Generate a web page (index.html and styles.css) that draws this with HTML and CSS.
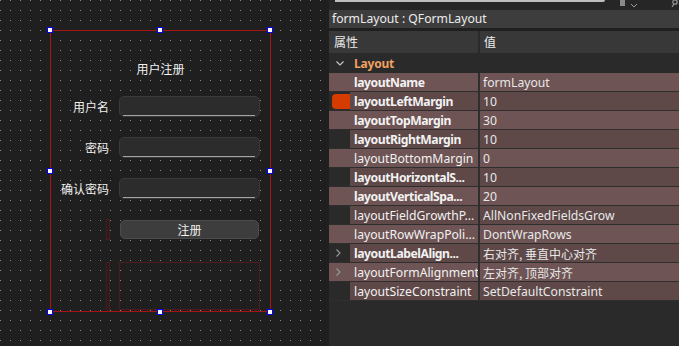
FILE: index.html
```html
<!DOCTYPE html>
<html>
<head>
<meta charset="utf-8">
<link rel="stylesheet" href="styles.css">
</head>
<body>
<div class="app">
  <div class="canvas">
    <div class="form">
      <span class="handle h-tl"></span>
      <span class="handle h-tm"></span>
      <span class="handle h-tr"></span>
      <span class="handle h-ml"></span>
      <span class="handle h-mr"></span>
      <span class="handle h-bl"></span>
      <span class="handle h-bm"></span>
      <span class="handle h-br"></span>
      <div class="grid">
        <div class="title">用户注册</div>
        <div class="lbl">用户名</div><div class="edit"></div>
        <div class="lbl">密码</div><div class="edit"></div>
        <div class="lbl">确认密码</div><div class="edit"></div>
        <div class="ghost-l"></div><div class="btn">注册</div>
        <div class="ghost-l spacer"></div><div class="ghost-f"></div>
      </div>
    </div>
  </div>
  <div class="panel">
    <div class="toolbar">
      <div class="filter"></div>
      <div class="tb-icon"></div>
      <svg class="tb-arrow" width="6" height="4" viewBox="0 0 6 4"><path d="M0 0 L3 3 L6 0" fill="none" stroke="#9a9a9a" stroke-width="1"/></svg>
      <svg class="tb-gear" width="8" height="7" viewBox="0 0 8 7"><circle cx="4" cy="2" r="2.2" fill="none" stroke="#9a9a9a" stroke-width="1.2"/><path d="M1 7 L3 4" stroke="#9a9a9a" stroke-width="1.2"/></svg>
    </div>
    <div class="titlebar">formLayout : QFormLayout</div>
    <div class="sep"></div>
    <div class="header"><div class="h-name">属性</div><div class="h-val">值</div></div>
    <div class="group">
      <svg class="gchev" width="8" height="5" viewBox="0 0 8 5"><path d="M0.5 0.5 L4 4 L7.5 0.5" fill="none" stroke="#c8c8c8" stroke-width="1.2"/></svg>
      <span class="gname">Layout</span>
    </div>
    <div class="row alt"><div class="ind"></div><div class="name b">layoutName</div><div class="val">formLayout</div></div>
    <div class="row"><div class="ind"><span class="marker"></span></div><div class="name b">layoutLeftMargin</div><div class="val">10</div></div>
    <div class="row alt"><div class="ind"></div><div class="name b">layoutTopMargin</div><div class="val">30</div></div>
    <div class="row"><div class="ind"></div><div class="name b">layoutRightMargin</div><div class="val">10</div></div>
    <div class="row alt"><div class="ind"></div><div class="name">layoutBottomMargin</div><div class="val">0</div></div>
    <div class="row"><div class="ind"></div><div class="name b">layoutHorizontalS...</div><div class="val">10</div></div>
    <div class="row alt"><div class="ind"></div><div class="name b">layoutVerticalSpa...</div><div class="val">20</div></div>
    <div class="row"><div class="ind"></div><div class="name">layoutFieldGrowthP...</div><div class="val">AllNonFixedFieldsGrow</div></div>
    <div class="row alt"><div class="ind"></div><div class="name">layoutRowWrapPoli...</div><div class="val">DontWrapRows</div></div>
    <div class="row"><div class="ind"><svg class="rchev" width="5" height="8" viewBox="0 0 5 8"><path d="M0.5 0.5 L4 4 L0.5 7.5" fill="none" stroke="#9a9a9a" stroke-width="1.1"/></svg></div><div class="name b">layoutLabelAlign...</div><div class="val cjk">右对齐, 垂直中心对齐</div></div>
    <div class="row alt"><div class="ind"><svg class="rchev" width="5" height="8" viewBox="0 0 5 8"><path d="M0.5 0.5 L4 4 L0.5 7.5" fill="none" stroke="#9a9a9a" stroke-width="1.1"/></svg></div><div class="name">layoutFormAlignment</div><div class="val cjk">左对齐, 顶部对齐</div></div>
    <div class="row"><div class="ind"></div><div class="name">layoutSizeConstraint</div><div class="val">SetDefaultConstraint</div></div>
  </div>
</div>
</body>
</html>
```

FILE: styles.css
```css
* { box-sizing: border-box; }
html, body { margin: 0; padding: 0; }
body {
  width: 679px;
  height: 346px;
  overflow: hidden;
  background: #202020;
  font-family: "Noto Sans", "Noto Sans CJK SC", sans-serif;
}
.app { display: flex; height: 346px; }

/* ---------- designer canvas ---------- */
.canvas {
  width: 329px;
  flex: none;
  height: 100%;
  background-color: #1f1f1f;
  background-image:
    linear-gradient(90deg, #1f1f1f 9px, transparent 9px),
    linear-gradient(#1f1f1f 9px, #8a8a8a 9px);
  background-size: 10px 10px;
  background-position: 1px 1px;
  padding: 30px 0 0 50px;
}
.form {
  position: relative;
  width: 221px;
  height: 282px;
  border: 1px solid #a81414;
}
.handle {
  position: absolute;
  width: 6px;
  height: 6px;
  background: #fff;
  border: 1px solid #0000ff;
  z-index: 2;
}
.h-tl { left: -4px; top: -4px; }
.h-tm { left: 106px; top: -4px; }
.h-tr { left: 216px; top: -4px; }
.h-ml { left: -4px; top: 137px; }
.h-mr { left: 216px; top: 137px; }
.h-bl { left: -4px; top: 278px; }
.h-bm { left: 106px; top: 278px; }
.h-br { left: 216px; top: 278px; }

.grid {
  display: grid;
  grid-template-columns: 48px 141px;
  grid-template-rows: 15px 21px 21px 21px 21px 51px;
  column-gap: 10px;
  row-gap: 20px;
  padding: 30px 10px 0 10px;
  font-family: "Noto Sans CJK SC", sans-serif;
  font-size: 12px;
  color: #f0f0f0;
}
.title {
  grid-column: 1 / -1;
  text-align: center;
  line-height: 15px;
}
.lbl {
  text-align: right;
  align-self: center;
  line-height: 16px;
  white-space: nowrap;
}
.edit {
  position: relative;
  background: #2c2c2c;
  border: 1px solid #3a3a3a;
  border-radius: 5px;
}
.edit::after {
  content: "";
  position: absolute;
  left: 3px;
  right: 4px;
  bottom: 0;
  height: 1px;
  background: #a3a3a3;
}
.btn {
  margin: 1px;
  background: #3d3d3d;
  border: 1px solid #4c4c4c;
  border-radius: 5px;
  display: flex;
  align-items: center;
  justify-content: center;
  line-height: 16px;
}
.ghost-l {
  justify-self: end;
  width: 4px;
  margin-right: -1px;
  border: 1px solid #4e1a1a;
}
.ghost-l.spacer { margin-top: 2px; margin-bottom: 1px; }
.ghost-f {
  margin-top: 2px;
  margin-bottom: 1px;
  border: 1px solid #4e1a1a;
}

/* ---------- property panel ---------- */
.panel {
  flex: 1;
  background: #2a2a2a;
  display: flex;
  flex-direction: column;
  font-size: 12.2px;
  color: #ececec;
}
.toolbar {
  height: 10px;
  flex: none;
  background: #262626;
  display: flex;
  align-items: flex-start;
}
.filter {
  margin-left: 6px;
  width: 270px;
  height: 2px;
  background: #bdbdbd;
  border-radius: 0 0 3px 0;
}
.tb-icon {
  margin-left: 15px;
  width: 5px;
  height: 6px;
  background: #8a8a8a;
}
.tb-arrow { margin-left: 6px; margin-top: 4px; }
.tb-gear { margin-left: 34px; }
.titlebar {
  height: 18px;
  flex: none;
  background: #3d3d3d;
  padding-left: 3px;
  line-height: 18px;
  white-space: nowrap;
}
.sep { height: 3px; flex: none; background: #202020; }
.header {
  height: 22px;
  flex: none;
  background: #383838;
  display: grid;
  grid-template-columns: 149px 1fr;
  font-family: "Noto Sans CJK SC", sans-serif;
  font-size: 12px;
  line-height: 22px;
}
.h-name { padding-left: 5px; }
.h-val { border-left: 2px solid #2a2a2a; padding-left: 4px; }
.group {
  height: 20px;
  flex: none;
  display: flex;
  align-items: center;
  padding-left: 7px;
}
.gchev { flex: none; }
.gname {
  margin-left: 10px;
  font-weight: 700;
  color: #f0a060;
  font-size: 12px;
  letter-spacing: -0.2px;
}
.row {
  height: 19px;
  flex: none;
  display: grid;
  grid-template-columns: 21px 128px 1fr;
  background: #5e4848;
  border-bottom: 1px solid #2e2e2e;
  line-height: 18px;
  white-space: nowrap;
}
.row .ind {
  background: #2a2a2a;
  display: flex;
  align-items: center;
  padding-left: 7px;
}
.row.alt { background: #6e5454; }
.row.alt .ind { background: transparent; }
.marker {
  width: 18px;
  height: 15px;
  margin-left: -4px;
  margin-top: 1px;
  background: #d63c02;
  border-radius: 4px 0 0 4px;
}
.name {
  padding-left: 4px;
  padding-top: 1px;
  overflow: hidden;
  color: #f2f2f2;
}
.name.b { font-weight: 700; letter-spacing: -0.45px; }
.val {
  border-left: 2px solid #2e2e2e;
  padding-left: 3px;
  padding-top: 1px;
  overflow: hidden;
  color: #e8e8e8;
}
.val.cjk {
  font-family: "Noto Sans CJK SC", sans-serif;
  font-size: 12px;
}
```
